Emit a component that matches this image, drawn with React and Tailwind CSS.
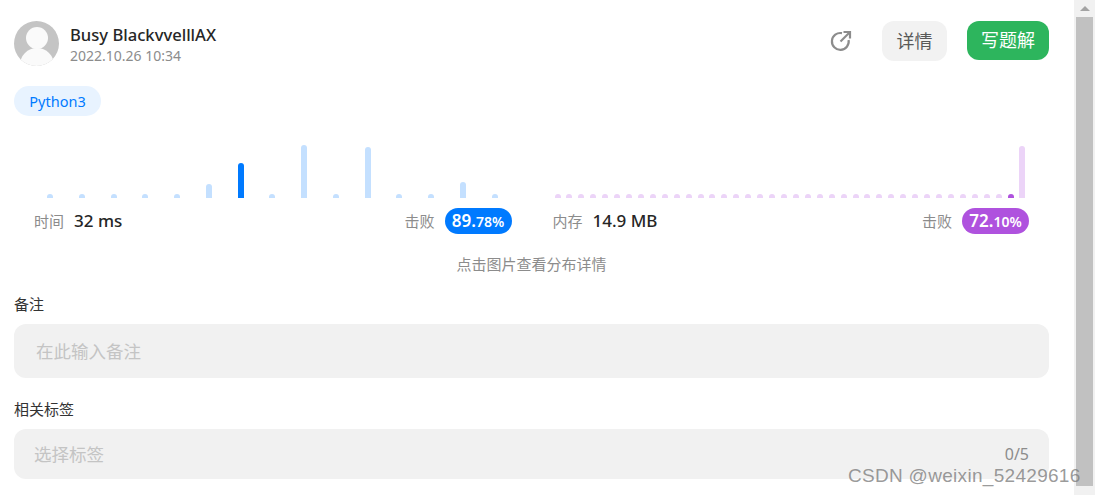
import React from 'react'

const FONT = "font-['Noto_Sans','Noto_Sans_CJK_SC',sans-serif]"

const TIME_BARS = [4, 4, 4, 4, 4, 14, 35, 4, 53, 4, 51, 4, 4, 16, 4]
const TIME_ACTIVE = 6
const MEMORY_BARS = [...Array(39).fill(4), 52]
const MEMORY_ACTIVE = 38

function Avatar() {
  return (
    <svg width="45" height="45" viewBox="0 0 45 45" className="shrink-0">
      <defs>
        <clipPath id="avatar-clip">
          <circle cx="22.5" cy="22.5" r="22.5" />
        </clipPath>
      </defs>
      <g clipPath="url(#avatar-clip)">
        <rect width="45" height="45" fill="#c4c4c4" />
        <circle cx="23" cy="17" r="11" fill="#fafafa" />
        <ellipse cx="23" cy="44" rx="17" ry="17" fill="#fafafa" />
      </g>
    </svg>
  )
}

function ShareIcon() {
  return (
    <svg width="22" height="22" viewBox="0 0 22 22" fill="none" stroke="#8c8c8c" strokeWidth="2.2">
      <path d="M12 3.2 A8.4 8.4 0 1 0 18.6 10" />
      <path d="M10.5 11.5 L19.5 2.5" />
      <path d="M13.5 2 H20 V8.5" />
    </svg>
  )
}

function Chart({ bars, active, dim, strong, className }) {
  return (
    <div className={`flex items-end justify-between h-[53px] ${className}`}>
      {bars.map((h, i) => (
        <div
          key={i}
          className="w-[6px] rounded-t-[3px]"
          style={{ height: h, background: i === active ? strong : dim }}
        />
      ))}
    </div>
  )
}

function Stat({ label, value, whole, frac, pill }) {
  return (
    <div className="flex items-center mt-[10px] h-[26px]">
      <span className="text-[15px] text-[#8c8c8c]">{label}</span>
      <span className="ml-[10px] text-[17px] font-medium text-[#262626]">{value}</span>
      <span className="ml-auto text-[15px] text-[#8c8c8c]">击败</span>
      <span className={`ml-[10px] w-[67px] h-[26px] rounded-full flex items-baseline justify-center leading-[26px] text-white font-semibold ${pill}`}>
        <span className="text-[17px]">{whole}</span>
        <span className="text-[14px]">{frac}</span>
      </span>
    </div>
  )
}

function Scrollbar() {
  return (
    <div className="w-[21px] shrink-0 h-full bg-[#f1f1f1] flex flex-col items-center">
      <div className="h-[17px] flex items-center justify-center shrink-0">
        <div className="w-0 h-0 border-x-[5px] border-x-transparent border-b-[5px] border-b-[#a3a3a3]" />
      </div>
      <div className="w-[17px] h-[469px] bg-[#c1c1c1]" />
    </div>
  )
}

export default function App() {
  return (
    <div className={`relative flex w-[1095px] h-[495px] overflow-hidden bg-white ${FONT}`}>
      <main className="flex-1 pl-[14px] pr-[25px] pt-[21px]">
        {/* Header */}
        <div className="flex items-start">
          <Avatar />
          <div className="ml-[11px] mt-[1px]">
            <div className="text-[16.6px] leading-[25px] font-medium text-[#262626]">Busy BlackvvelllAX</div>
            <div className="text-[14px] leading-[18px] text-[#8c8c8c]">2022.10.26 10:34</div>
          </div>
          <button className="ml-auto mt-[9px] mr-[30px]"><ShareIcon /></button>
          <button className="w-[65px] h-[40px] rounded-[12px] bg-[#f2f2f2] text-[18px] text-[#595959]">详情</button>
          <button className="ml-[20px] w-[82px] h-[39px] rounded-[12px] bg-[#2db55d] text-[18px] text-white">写题解</button>
        </div>

        {/* Language tag */}
        <div className="mt-[20px] w-[87px] h-[30px] rounded-full bg-[#e8f3ff] text-[#007aff] text-[14.5px] leading-[30px] text-center">
          Python3
        </div>

        {/* Distribution charts */}
        <div className="grid grid-cols-2 mt-[29px]">
          <div className="pl-[20px] pr-[20px]">
            <Chart bars={TIME_BARS} active={TIME_ACTIVE} dim="#c4e0ff" strong="#007aff" className="ml-[13px] mr-[14px]" />
            <Stat label="时间" value="32 ms" whole="89." frac="78%" pill="bg-[#007aff]" />
          </div>
          <div className="pl-[21px] pr-[20px]">
            <Chart bars={MEMORY_BARS} active={MEMORY_ACTIVE} dim="#ecd4f8" strong="#af52de" className="ml-[2px] mr-[3px]" />
            <Stat label="内存" value="14.9 MB" whole="72." frac="10%" pill="bg-[#af52de]" />
          </div>
        </div>

        <p className="mt-[19px] text-center text-[15px] leading-[22px] text-[#8c8c8c]">点击图片查看分布详情</p>

        {/* Note */}
        <label className="block mt-[18px] text-[15px] leading-[22px] text-[#333333]">备注</label>
        <input
          placeholder="在此输入备注"
          className="block w-full mt-[9px] h-[54px] rounded-[12px] bg-[#f1f1f1] pl-[22px] text-[17.5px] outline-none placeholder:text-[#c4c4c4]"
        />

        {/* Tags */}
        <label className="block mt-[20px] text-[15px] leading-[22px] text-[#333333]">相关标签</label>
        <div className="flex items-center mt-[9px] h-[50px] rounded-[12px] bg-[#f1f1f1] pl-[20px] pr-[20px]">
          <span className="text-[17.5px] text-[#c4c4c4]">选择标签</span>
          <span className="ml-auto text-[16px] text-[#8c8c8c]">0/5</span>
        </div>
      </main>
      <Scrollbar />

      {/* Watermark */}
      <div className="absolute left-[848px] top-[464px] font-['Liberation_Sans',sans-serif] text-[19px] leading-[24px] tracking-[0.3px] text-[#7f7f7f]/80 whitespace-nowrap">
        CSDN @weixin_52429616
      </div>
    </div>
  )
}
